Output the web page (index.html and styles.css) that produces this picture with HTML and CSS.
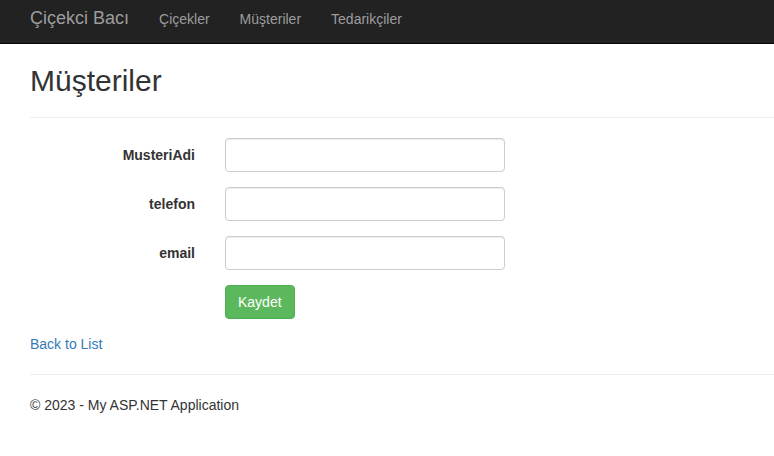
FILE: index.html
```html
<!DOCTYPE html>
<html lang="tr">
<head>
<meta charset="utf-8">
<title>Müşteriler</title>
<link rel="stylesheet" href="styles.css">
</head>
<body>
<nav class="navbar">
  <a class="brand" href="#">Çiçekci Bacı</a>
  <ul class="nav">
    <li><a href="#">Çiçekler</a></li>
    <li><a href="#">Müşteriler</a></li>
    <li><a href="#">Tedarikçiler</a></li>
  </ul>
</nav>
<div class="body-content">
  <h2 class="title">Müşteriler</h2>
  <hr class="rule">
  <form class="form">
    <div class="form-group">
      <label class="label" for="ad">MusteriAdi</label>
      <input class="input" id="ad" type="text">
    </div>
    <div class="form-group">
      <label class="label" for="tel">telefon</label>
      <input class="input" id="tel" type="text">
    </div>
    <div class="form-group">
      <label class="label" for="em">email</label>
      <input class="input" id="em" type="text">
    </div>
    <div class="form-group">
      <span class="label"></span>
      <div><button class="btn" type="button">Kaydet</button></div>
    </div>
  </form>
  <div class="back"><a href="#">Back to List</a></div>
  <hr class="rule">
  <footer class="footer">
    <p>© 2023 - My ASP.NET Application</p>
  </footer>
</div>
</body>
</html>
```
FILE: styles.css
```css
* { box-sizing: border-box; }
html, body { margin: 0; padding: 0; }
body {
  font-family: "Liberation Sans", Arial, Helvetica, sans-serif;
  font-size: 14px;
  line-height: 20px;
  color: #333;
  background: #fff;
  overflow: hidden;
}
a { color: #337ab7; text-decoration: none; }

.navbar {
  height: 44px;
  background: #222;
  border-bottom: 1px solid #080808;
  display: flex;
  align-items: flex-start;
  padding-left: 15px;
}
.brand {
  display: block;
  padding: 8px 15px 0 15px;
  font-size: 18px;
  line-height: 20px;
  color: #9d9d9d;
}
.nav {
  list-style: none;
  margin: 0;
  padding: 0;
  display: flex;
}
.nav a {
  display: block;
  padding: 9px 15px 0 15px;
  line-height: 20px;
  color: #9d9d9d;
}

.body-content {
  padding-left: 30px;
}
.title {
  font-size: 30px;
  font-weight: 500;
  line-height: 33px;
  margin: 20px 0 10px 0;
}
.rule {
  border: 0;
  border-top: 1px solid #eee;
  margin: 20px 0;
  height: 0;
}
.form { margin: 0; }
.form-group {
  display: grid;
  grid-template-columns: 165px 280px;
  column-gap: 30px;
  margin-bottom: 15px;
}
.label {
  text-align: right;
  font-weight: 700;
  padding-top: 7px;
}
.input {
  display: block;
  width: 280px;
  height: 34px;
  padding: 6px 12px;
  font: inherit;
  color: #555;
  background: #fff;
  border: 1px solid #ccc;
  border-radius: 4px;
  box-shadow: inset 0 1px 1px rgba(0,0,0,.075);
}
.btn {
  height: 34px;
  padding: 6px 12px;
  font: inherit;
  color: #fff;
  background: #5cb85c;
  border: 1px solid #4cae4c;
  border-radius: 4px;
}
.back { line-height: 20px; }
.footer p { margin: 0 0 10px 0; }
```
